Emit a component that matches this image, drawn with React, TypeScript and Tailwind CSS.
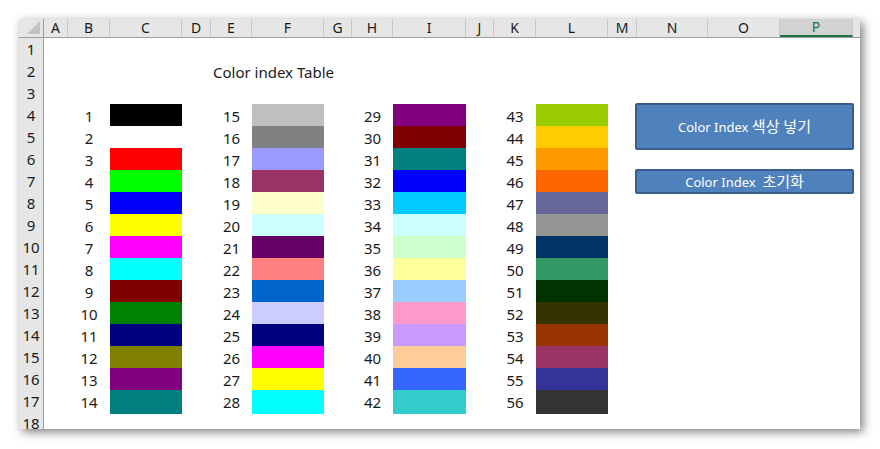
import React from 'react'

const COLS = ['A', 'B', 'C', 'D', 'E', 'F', 'G', 'H', 'I', 'J', 'K', 'L', 'M', 'N', 'O', 'P', 'Q']

// Excel's default 56-colour palette
const PALETTE = [
  '#000000', '#FFFFFF', '#FF0000', '#00FF00', '#0000FF', '#FFFF00', '#FF00FF', '#00FFFF',
  '#800000', '#008000', '#000080', '#808000', '#800080', '#008080', '#C0C0C0', '#808080',
  '#9999FF', '#993366', '#FFFFCC', '#CCFFFF', '#660066', '#FF8080', '#0066CC', '#CCCCFF',
  '#000080', '#FF00FF', '#FFFF00', '#00FFFF', '#800080', '#800000', '#008080', '#0000FF',
  '#00CCFF', '#CCFFFF', '#CCFFCC', '#FFFF99', '#99CCFF', '#FF99CC', '#CC99FF', '#FFCC99',
  '#3366FF', '#33CCCC', '#99CC00', '#FFCC00', '#FF9900', '#FF6600', '#666699', '#969696',
  '#003366', '#339966', '#003300', '#333300', '#993300', '#993366', '#333399', '#333333',
]

// number column -> swatch column, and first index of each block
const BLOCKS: Record<string, { swatch: string; start: number }> = {
  B: { swatch: 'C', start: 1 },
  E: { swatch: 'F', start: 15 },
  H: { swatch: 'I', start: 29 },
  K: { swatch: 'L', start: 43 },
}

const GRID = 'grid grid-cols-[25px_24px_42px_72px_29px_41px_72px_28px_41px_73px_28px_42px_72px_29px_71px_72px_73px_7px]'

function Cell({ row, col }: { row: number; col: string }) {
  if (row === 2 && col === 'E') {
    return (
      <div className="relative flex items-center pl-[2px] whitespace-nowrap overflow-visible z-10">
        Color index Table
      </div>
    )
  }
  if (row >= 4 && row <= 17) {
    const block = BLOCKS[col]
    if (block) {
      return <div className="flex items-center justify-center">{block.start + row - 4}</div>
    }
    const owner = Object.values(BLOCKS).find(b => b.swatch === col)
    if (owner) {
      return <div style={{ backgroundColor: PALETTE[owner.start + row - 5] }} />
    }
  }
  return <div />
}

export default function App() {
  const rows = Array.from({ length: 18 }, (_, i) => i + 1)

  return (
    <div className="w-[880px] h-[449px] bg-white pt-[19px] pl-[19px] font-['Noto_Sans','Noto_Sans_CJK_KR',sans-serif] text-[15px] text-[#1a1a1a]">
      <div className="relative w-[841px] h-[410px] bg-white overflow-hidden shadow-[3px_3px_9px_rgba(0,0,0,0.5)]">
        {/* column header */}
        <div className={`${GRID} h-[19px] bg-[#e6e6e6] border-b border-[#9e9e9e] text-[14px] leading-[16px]`}>
          <div className="relative border-r border-[#9e9e9e]">
            <div className="absolute right-[3px] bottom-[3px] w-0 h-0 border-l-[13px] border-l-transparent border-b-[13px] border-b-[#c2c2c2]" />
          </div>
          {COLS.map(c =>
            c === 'P' ? (
              <div key={c} className="flex items-center justify-center bg-[#d2d2d2] text-[#217346] border-r border-[#c6c6c6] border-b-2 border-b-[#217346]">
                {c}
              </div>
            ) : c === 'Q' ? (
              <div key={c} />
            ) : (
              <div key={c} className="flex items-center justify-center border-r border-[#c6c6c6]">
                {c}
              </div>
            )
          )}
        </div>

        {rows.map(r => (
          <div key={r} className={`${GRID} h-[22px]`}>
            <div className="flex items-center justify-center bg-[#e6e6e6] border-r border-[#9e9e9e] border-b border-b-[#c6c6c6]">
              {r}
            </div>
            {COLS.map(c => (
              <Cell key={c} row={r} col={c} />
            ))}
          </div>
        ))}

        {/* buttons (shapes floating over the sheet) */}
        <div className="absolute left-[616px] top-[84px] w-[219px] h-[47px] rounded-[2px] bg-[#4f81bd] border-2 border-[#385d8a] flex items-center justify-center text-white text-[13px]">
          <span>Color Index <span className="text-[15px]">색상 넣기</span></span>
        </div>
        <div className="absolute left-[616px] top-[150px] w-[219px] h-[25px] rounded-[2px] bg-[#4f81bd] border-2 border-[#385d8a] flex items-center justify-center text-white text-[13px]">
          <span className="whitespace-pre">Color Index  <span className="text-[15px]">초기화</span></span>
        </div>
      </div>
    </div>
  )
}
